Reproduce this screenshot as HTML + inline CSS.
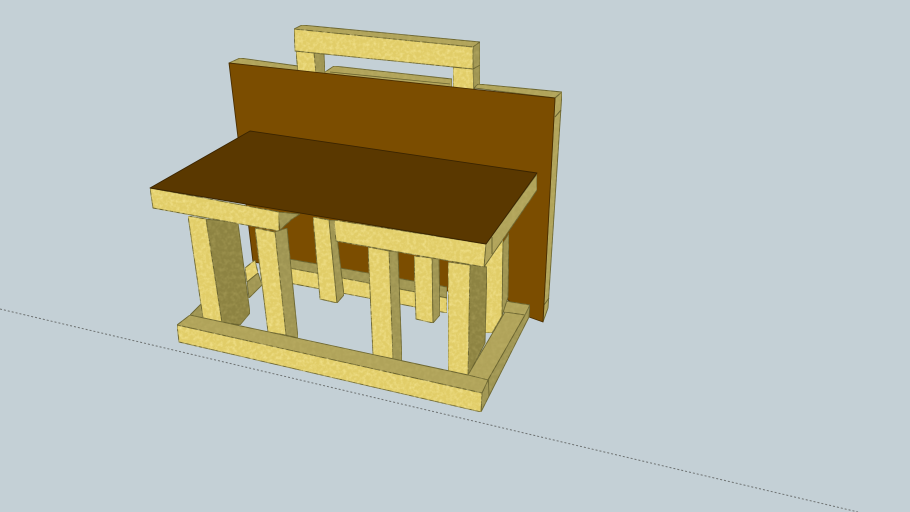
<!DOCTYPE html>
<html>
<head>
<meta charset="utf-8">
<style>
html,body{margin:0;padding:0;background:#c4d0d6;width:910px;height:512px;overflow:hidden}
svg{display:block}
polygon{stroke:#6a6430;stroke-width:.9;stroke-linejoin:round}
.y{fill:#e1cd68;filter:url(#tex)}
.s{fill:#9f9553;filter:url(#tex2)}
.d{fill:#8d8342;filter:url(#tex2)}
.t{fill:#b0a35a;filter:url(#tex2)}
.o{fill:#7b4d00;stroke:#4a2e00}
.k{fill:#5a3800;stroke:#3a2400}
</style>
</head>
<body>
<svg width="910" height="512" viewBox="0 0 910 512" xmlns="http://www.w3.org/2000/svg">
<defs>
<filter id="tex" x="0" y="0" width="100%" height="100%" color-interpolation-filters="sRGB">
<feTurbulence type="fractalNoise" baseFrequency="0.3" numOctaves="3" seed="4" result="n"/>
<feColorMatrix in="n" type="matrix" values="0 0 0 0 0.96  0 0 0 0 0.90  0 0 0 0 0.58  1.6 0 0 0 -0.65" result="c"/>
<feComposite in="c" in2="SourceGraphic" operator="atop" result="m"/>
<feGaussianBlur in="m" stdDeviation="0.3"/>
</filter>
<filter id="tex2" x="0" y="0" width="100%" height="100%" color-interpolation-filters="sRGB">
<feTurbulence type="fractalNoise" baseFrequency="0.25" numOctaves="2" seed="9" result="n"/>
<feColorMatrix in="n" type="matrix" values="0 0 0 0 0.8  0 0 0 0 0.75  0 0 0 0 0.45  0.6 0 0 0 -0.24" result="c"/>
<feComposite in="c" in2="SourceGraphic" operator="atop" result="m"/>
<feGaussianBlur in="m" stdDeviation="0.3"/>
</filter>
<filter id="soft"><feGaussianBlur stdDeviation="0.35"/></filter>
</defs>
<rect width="910" height="512" fill="#c4d0d6"/>
<line x1="0" y1="309" x2="858" y2="512" stroke="#6e7272" stroke-width="1" stroke-dasharray="2 2"/>
<g>
<!-- handle -->
<polygon class="s" points="314,53 324,54 325,74 315,74"/>
<polygon class="y" points="296,51 314,53 316,74 298,74"/>
<polygon class="t" points="325,72 334,66 452,79 452,90 325,76"/>
<line x1="330" y1="72" x2="450" y2="84" stroke="#6a6430" stroke-width=".8"/>
<polygon class="y" points="453,67 473,69 474,90 453,88"/>
<polygon class="s" points="473,69 480,65 480,84 473,90"/>
<polygon class="t" points="294,29 302,25 480,42 473,47"/>
<polygon class="y" points="294,29 473,47 473,69 295,51"/>
<polygon class="s" points="473,47 480,42 480,65 473,69"/>

<!-- board -->
<polygon class="t" points="229,63 240,58 298,66 298,72"/>
<polygon class="t" points="474,88 478,84 562,92 555,98"/>
<polygon class="t" points="555,98 562,92 548,308 543,322"/>
<line x1="555" y1="117" x2="561" y2="110" stroke="#6a6430"/>
<line x1="544" y1="305" x2="549" y2="298" stroke="#6a6430"/>
<polygon class="o" points="229,63 555,98 543,322 529,317 508,300 253,262"/>

<!-- back rails -->
<polygon class="s" points="289,259 447,287 447,298 289,268"/>
<polygon class="y" points="289,268 447,298 447,313 289,283"/>
<polygon class="y" points="245,268 255,260 258,273 247,282"/>
<polygon class="s" points="247,282 258,273 262,285 249,298"/>

<!-- frame back parts -->
<polygon class="s" points="190,315 202,303 212,306 212,322"/>
<polygon class="t" points="505,301 530,305 525,315 503,312"/>

<!-- back legs -->
<polygon class="y" points="313,217 329,220 337,303 320,299"/>
<polygon class="s" points="329,220 335,220 344,295 337,303"/>
<polygon class="y" points="414,256 432,258 433,323 416,319"/>
<polygon class="s" points="432,258 439,259 440,315 433,323"/>
<polygon class="y" points="485,262 503,240 502,316 492,333 485,333"/>
<polygon class="s" points="503,243 509,233 508,297 502,316"/>

<!-- front legs -->
<polygon class="d" points="206,219 238,223 250,313 240,325 222,322"/>
<polygon class="y" points="188,216 206,219 222,323 203,318"/>
<polygon class="s" points="275,232 287,228 298,338 286,335"/>
<polygon class="y" points="255,228 275,232 286,335 268,332"/>
<polygon class="s" points="389,251 398,252 402,362 393,359"/>
<polygon class="y" points="368,247 389,251 393,359 373,355"/>
<polygon class="d" points="470,265 487,267 485,343 468,376"/>
<polygon class="y" points="448,262 470,265 468,376 448,372"/>

<!-- bottom frame -->
<polygon class="t" points="468,375 505,312 525,315 488,380"/>
<polygon class="s" points="488,380 525,315 530,305 529,317 481,412 482,393"/>
<line x1="488.500" y1="380" x2="489" y2="396" stroke="#6a6430" stroke-width=".8"/>
<polygon class="t" points="177,325 190,315 468,375 488,380 482,393"/>
<polygon class="y" points="177,325 482,393 481,412 179,342"/>

<!-- table -->
<polygon class="s" points="278,212 300,214 292,219 280,230"/>
<polygon class="y" points="150,188 279,212 279,231 153,208"/>
<polygon class="y" points="334,220 486,244 484,267 336,241"/>
<polygon class="t" points="486,244 537,174 537,190 484,267"/>
<line x1="492" y1="237" x2="492" y2="254" stroke="#6a6430"/>
<polygon class="k" points="150,188 250,131 537,173 486,244"/>
</g>
</svg>
</body>
</html>
